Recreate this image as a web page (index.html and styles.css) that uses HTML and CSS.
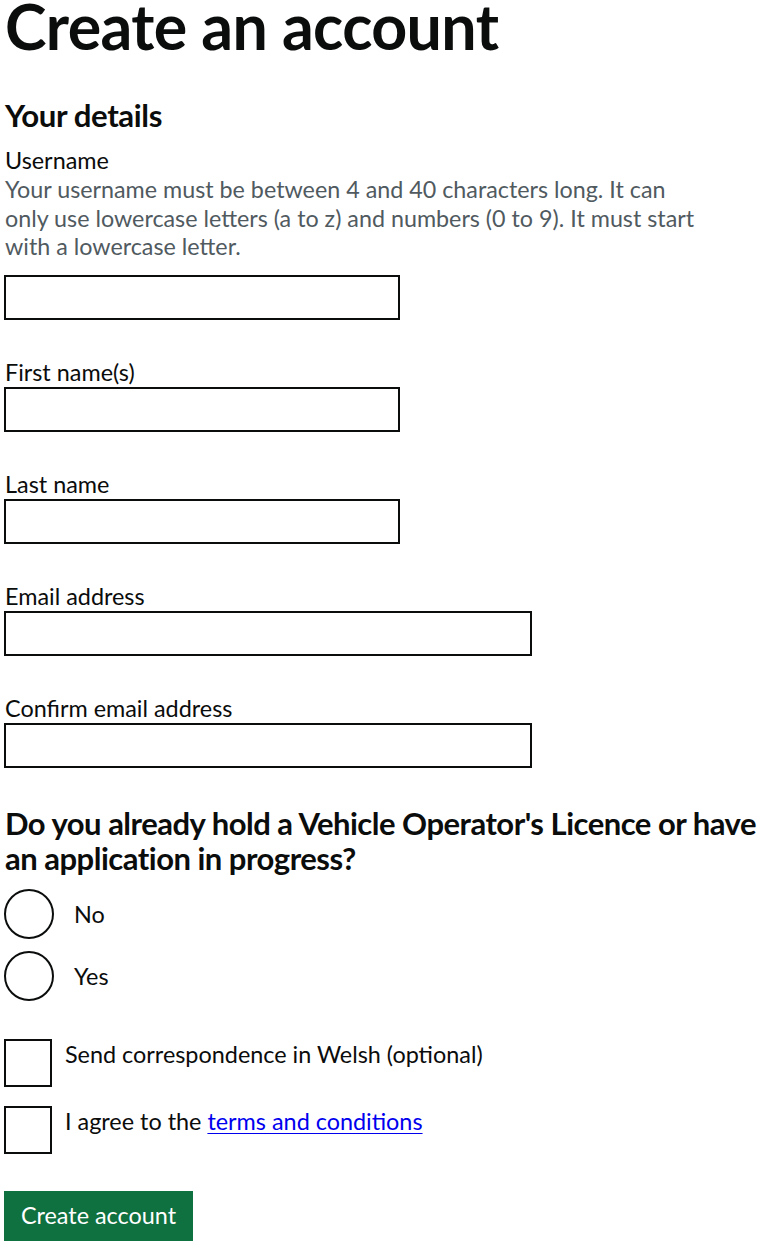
FILE: index.html
```html
<!DOCTYPE html>
<html lang="en">
<head>
<meta charset="utf-8">
<title>Create an account</title>
<link rel="stylesheet" href="styles.css">
</head>
<body>
<main class="page">
  <h1 class="title">Create an account</h1>
  <form class="form">
    <h2 class="section-title">Your details</h2>

    <div class="group">
      <label class="label" for="username">Username</label>
      <div class="hint">Your username must be between 4 and 40 characters long. It can only use lowercase letters (a to z) and numbers (0 to 9). It must start with a lowercase letter.</div>
      <input class="input input-short" id="username" type="text">
    </div>

    <div class="group">
      <label class="label" for="first">First name(s)</label>
      <input class="input input-short" id="first" type="text">
    </div>

    <div class="group">
      <label class="label" for="last">Last name</label>
      <input class="input input-short" id="last" type="text">
    </div>

    <div class="group">
      <label class="label" for="email">Email address</label>
      <input class="input input-long" id="email" type="email">
    </div>

    <div class="group">
      <label class="label" for="email2">Confirm email address</label>
      <input class="input input-long" id="email2" type="email">
    </div>

    <fieldset class="fieldset">
      <legend class="question">Do you already hold a Vehicle Operator's Licence or have an application in progress?</legend>
      <div class="radios">
        <label class="radio"><input type="radio" name="licence" class="radio-input"><span class="radio-mark"></span><span class="radio-label">No</span></label>
        <label class="radio"><input type="radio" name="licence" class="radio-input"><span class="radio-mark"></span><span class="radio-label">Yes</span></label>
      </div>
    </fieldset>

    <div class="checks">
      <label class="check"><input type="checkbox" class="check-input"><span class="check-mark"></span><span class="check-label">Send correspondence in Welsh (optional)</span></label>
      <label class="check"><input type="checkbox" class="check-input"><span class="check-mark"></span><span class="check-label">I agree to the <a href="#" class="link">terms and conditions</a></span></label>
    </div>

    <button type="button" class="button">Create account</button>
  </form>
</main>
</body>
</html>
```

FILE: styles.css
```css
* { box-sizing: border-box; }
html, body { margin: 0; padding: 0; background: #fff; }
body {
  font-family: Lato, "Noto Sans", Arial, sans-serif;
  color: #0b0c0c;
}
.page {
  padding: 0 4px;
}
.title {
  margin: 0 0 0 1px;
  font-size: 62.7px;
  line-height: 52px;
  font-weight: 700;
  letter-spacing: -0.6px;
}
.form { margin: 0; }
.section-title {
  margin: 45px 0 0 1px;
  font-size: 31.2px;
  line-height: 36px;
  font-weight: 700;
  letter-spacing: -0.4px;
}
.group {
  display: flex;
  flex-direction: column;
  align-items: flex-start;
  margin-bottom: 38px;
}
.group:first-of-type { margin-top: 13px; }
.label {
  display: block;
  margin-left: 1px;
  font-size: 23.4px;
  line-height: 29px;
}
.hint {
  margin: 0 0 14px 1px;
  max-width: 708px;
  font-size: 23.3px;
  line-height: 28.7px;
  color: #505a5f;
}
.input {
  display: block;
  height: 45px;
  margin: 0;
  padding: 4px;
  border: 2.5px solid #0b0c0c;
  border-radius: 0;
  font: inherit;
  font-size: 23px;
  background: #fff;
}
.input-short { width: 396px; }
.input-long { width: 528px; }

.fieldset {
  margin: 0;
  padding: 0;
  border: 0;
  min-width: 0;
}
.question {
  padding: 0;
  margin: 3px 0 13px 1px;
  font-size: 31px;
  line-height: 35px;
  font-weight: 700;
  letter-spacing: -0.5px;
}
.radios {
  display: flex;
  flex-direction: column;
  gap: 12px;
}
.radio {
  display: flex;
  align-items: center;
  gap: 20px;
  cursor: pointer;
}
.radio-input, .check-input {
  position: absolute;
  opacity: 0;
  width: 0;
  height: 0;
  margin: 0;
}
.radio-mark {
  width: 50px;
  height: 50px;
  border: 2.5px solid #0b0c0c;
  border-radius: 50%;
  flex: none;
}
.radio-label {
  font-size: 23.4px;
  line-height: 29px;
}

.checks {
  display: flex;
  flex-direction: column;
  gap: 19px;
  margin-top: 38px;
}
.check {
  display: flex;
  align-items: flex-start;
  gap: 13px;
  cursor: pointer;
}
.check-mark {
  width: 48px;
  height: 48px;
  border: 2.5px solid #0b0c0c;
  flex: none;
}
.check-label {
  font-size: 23.4px;
  line-height: 29px;
  padding-top: 1px;
}
.link {
  color: #0000ee;
  text-decoration: underline;
  text-underline-offset: 3px;
  text-decoration-thickness: 1px;
}

.button {
  display: block;
  margin-top: 37px;
  width: 189px;
  height: 50px;
  padding: 0 0 2px;
  border: 0;
  border-radius: 0;
  background: #0f7040;
  box-shadow: 0 2px 0 #002d18;
  color: #fff;
  font: inherit;
  font-size: 23.4px;
  line-height: 48px;
  cursor: pointer;
}
```
